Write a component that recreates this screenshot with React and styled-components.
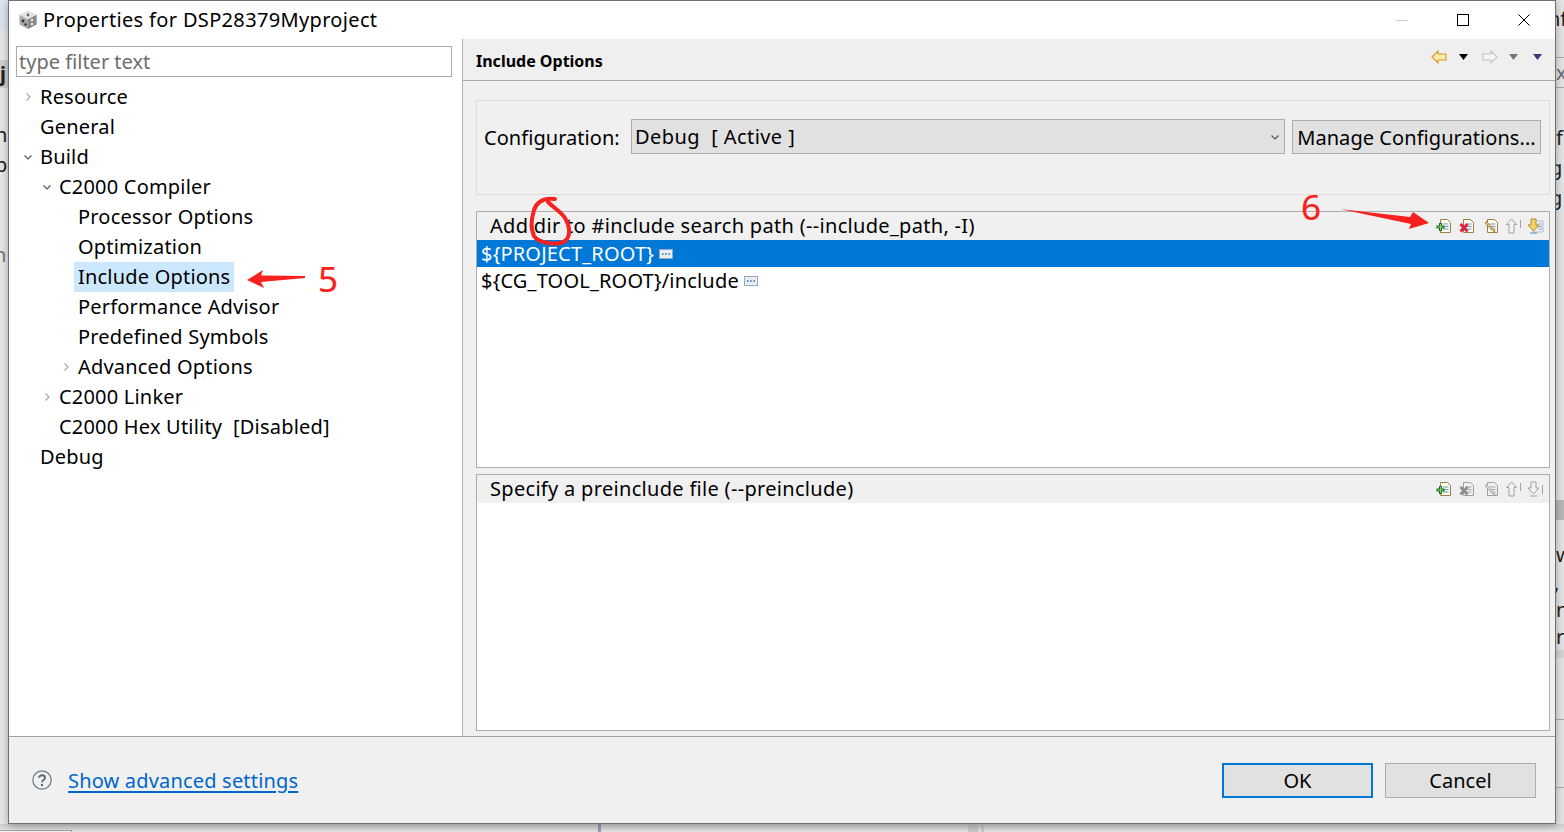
import styled, { createGlobalStyle } from "styled-components";

const Global = createGlobalStyle`
  html, body { margin: 0; padding: 0; height: 100%; background: #dcdcdc; overflow: hidden; }
  * { box-sizing: border-box; }
  #root { height: 832px; }
`;

const Page = styled.div`
  position: relative;
  width: 1564px;
  height: 832px;
  display: flex;
  font-family: "Noto Sans", "Open Sans", sans-serif;
  font-size: 20px;
  color: #000;
  overflow: hidden;
  background: #e4e4e4;
`;

const EdgeStrip = styled.div`
  width: ${({ $w }) => $w}px;
  height: 824px;
  flex: none;
  display: flex;
  flex-direction: column;
  overflow: hidden;
  background: ${({ $bg }) => $bg};
`;

const EdgeText = styled.div`
  height: ${({ $h }) => $h}px;
  line-height: ${({ $h }) => $h}px;
  flex: none;
  white-space: nowrap;
  font-weight: ${({ $bold }) => ($bold ? 700 : 400)};
  color: ${({ $c }) => $c || "#222"};
  background: ${({ $bg }) => $bg || "transparent"};
  border-top: ${({ $line }) => ($line ? "1px solid #aaa" : "none")};
  text-indent: ${({ $indent }) => $indent || 0}px;
  overflow: hidden;
`;

const Dialog = styled.div`
  width: 1548px;
  height: 824px;
  flex: none;
  display: flex;
  flex-direction: column;
  background: #f0f0f0;
  border: 1px solid #707070;
  box-shadow: 0 2px 8px rgba(0, 0, 0, 0.3);
  z-index: 1;
`;

const TitleBar = styled.div`
  height: 38px;
  flex: none;
  background: #fff;
  display: flex;
  align-items: center;
  padding-left: 9px;
`;

const TitleText = styled.span`
  margin-left: 5px;
  margin-bottom: 2px;
  letter-spacing: 0.34px;
`;

const WindowButtons = styled.div`
  margin-left: auto;
  margin-right: 1px;
  margin-bottom: 1px;
  display: flex;
  align-items: center;
`;

const WinBtn = styled.div`
  width: 61px;
  height: 37px;
  display: flex;
  align-items: center;
  justify-content: center;
`;

const Body = styled.div`
  flex: 1;
  min-height: 0;
  display: flex;
`;

const Sidebar = styled.div`
  width: 454px;
  flex: none;
  background: #fff;
  border-right: 1px solid #b4b4b4;
  padding: 7px 0 0 7px;
`;

const Filter = styled.div`
  width: 436px;
  height: 31px;
  border: 1px solid #ababab;
  line-height: 29px;
  padding-left: 2px;
  color: #6d6d6d;
  margin-bottom: 5px;
`;

const Row = styled.div`
  height: 30px;
  display: flex;
  align-items: center;
  padding-left: ${({ $level }) => 2 + $level * 19}px;
`;

const ChevronSlot = styled.div`
  width: 20px;
  margin-right: 2px;
  flex: none;
  display: flex;
  justify-content: center;
`;

const RowLabel = styled.span`
  padding: 0 4px;
  margin-left: -4px;
  height: 30px;
  line-height: 30px;
  white-space: pre;
  letter-spacing: 0.2px;
  background: ${({ $active }) => ($active ? "#cce8ff" : "transparent")};
`;

const Main = styled.div`
  flex: 1;
  min-width: 0;
  display: flex;
  flex-direction: column;
`;

const Header = styled.div`
  height: 42px;
  flex: none;
  background: #efefef;
  border-bottom: 1px solid #a8a8a8;
  display: flex;
  align-items: center;
  padding: 0 12px 0 13px;
`;

const HeaderTitle = styled.span`
  font-size: 16px;
  font-weight: 700;
  margin-top: 2px;
`;

const HeaderTools = styled.div`
  margin-left: auto;
  margin-bottom: 6px;
  display: flex;
  align-items: center;
`;

const HeaderSlot = styled.div`
  width: ${({ $w }) => $w}px;
  display: flex;
  align-items: center;
`;

const Content = styled.div`
  flex: 1;
  padding: 19px 5px 0 13px;
  display: flex;
  flex-direction: column;
`;

const ConfigBox = styled.div`
  height: 95px;
  flex: none;
  border: 1px solid #dcdcdc;
  display: flex;
  align-items: flex-start;
  padding: 19px 8px 0 7px;
  margin-bottom: 16px;
`;

const ConfigLabel = styled.span`
  width: 147px;
  flex: none;
  line-height: 36px;
  letter-spacing: 0.05px;
`;

const Combo = styled.div`
  flex: 1;
  height: 35px;
  margin: -1px 7px 0 0;
  background: #e1e1e1;
  border: 1px solid #adadad;
  display: flex;
  align-items: center;
  justify-content: space-between;
  padding: 0 4px 0 3px;
  white-space: pre;
  letter-spacing: 0.42px;
`;

const GrayButton = styled.div`
  height: ${({ $h }) => $h || 34}px;
  width: ${({ $w }) => $w}px;
  flex: none;
  background: #e1e1e1;
  border: ${({ $primary }) => ($primary ? "2px solid #0078d7" : "1px solid #adadad")};
  display: flex;
  align-items: center;
  justify-content: center;
  white-space: nowrap;
  letter-spacing: 0.06px;
`;

const Panel = styled.div`
  height: 257px;
  width: 1074px;
  flex: none;
  background: #fff;
  border: 1px solid #adadad;
  margin-bottom: ${({ $mb }) => $mb || 0}px;
`;

const PanelHead = styled.div`
  height: 28px;
  background: #f0f0f0;
  display: flex;
  align-items: center;
  padding: 0 3px 2px 13px;
  letter-spacing: 0.31px;
`;

const PanelTools = styled.div`
  margin-left: auto;
  margin-top: 1px;
  display: flex;
  align-items: center;
`;

const ToolSlot = styled.div`
  width: ${({ $w }) => $w}px;
  display: flex;
  justify-content: center;
`;

const ListRow = styled.div`
  height: 27px;
  display: flex;
  align-items: center;
  padding-left: 4px;
  gap: 5px;
  letter-spacing: 0.19px;
  background: ${({ $selected }) => ($selected ? "#0078d7" : "#fff")};
  color: ${({ $selected }) => ($selected ? "#fff" : "#000")};
`;

const Footer = styled.div`
  height: 87px;
  flex: none;
  border-top: 1px solid #a0a0a0;
  background: #f0f0f0;
  display: flex;
  align-items: center;
  padding: 0 19px 0 23px;
  gap: 12px;
`;

const HelpLink = styled.a`
  color: #0066cc;
  text-decoration: underline;
  text-underline-offset: 3px;
  letter-spacing: 0.18px;
  margin-left: 4px;
  margin-right: auto;
`;

const Annotations = styled.svg`
  position: absolute;
  left: 0;
  top: 0;
  z-index: 2;
  pointer-events: none;
`;

const RedNumber = styled.span`
  position: absolute;
  z-index: 2;
  left: ${({ $x }) => $x}px;
  top: ${({ $y }) => $y}px;
  color: #f8211f;
  font-size: 35px;
  line-height: 40px;
  font-weight: 400;
  -webkit-text-stroke: 0.2px #f8211f;
`;

const BottomBits = styled.div`
  position: absolute;
  left: 0;
  right: 0;
  top: 824px;
  height: 8px;
  background: linear-gradient(#cfcfcf, #e6e6e6);
  display: flex;
`;

const BottomCell = styled.div`
  width: ${({ $w }) => $w}px;
  flex: none;
  background: ${({ $bg }) => $bg || "transparent"};
`;

const BottomTab = styled.div`
  width: 72px;
  flex: none;
  margin-top: 6px;
  border-top: 1px solid #a8a8b0;
  border-right: 1px solid #a8a8b0;
  background: #f4f4f4;
`;

const Chevron = ({ open }) => (
  <svg width="10" height="10" viewBox="0 0 10 10">
    <path
      d={open ? "M1.5 3.5 L5 7 L8.5 3.5" : "M3.5 1.5 L7 5 L3.5 8.5"}
      fill="none"
      stroke={open ? "#555" : "#a8a8a8"}
      strokeWidth="1.2"
    />
  </svg>
);

const CubeIcon = () => (
  <svg width="20" height="20" viewBox="0 0 20 20">
    <path d="M10 1 L18.5 5 L18.5 14.5 L10 19 L1.5 14.5 L1.5 5 Z" fill="#a9a9a9" />
    <path d="M10 1 L18.5 5 L10 9.5 L1.5 5 Z" fill="#e4e4e4" />
    <path d="M10 9.5 L18.5 5 L18.5 14.5 L10 19 Z" fill="#8a8a8a" />
    <circle cx="10" cy="5" r="1.4" fill="#666" />
    <circle cx="5" cy="11" r="1.4" fill="#333" />
    <circle cx="7.5" cy="14.5" r="1.2" fill="#333" />
    <circle cx="14" cy="10" r="1.2" fill="#eee" />
    <circle cx="14" cy="14" r="1.2" fill="#eee" />
  </svg>
);

const Triangle = ({ c }) => (
  <svg width="9" height="6" viewBox="0 0 9 6">
    <path d="M0 0 H9 L4.5 6 Z" fill={c} />
  </svg>
);

const NavArrow = ({ dir, fill, stroke }) => (
  <svg width="16" height="14" viewBox="0 0 16 14">
    <path
      d={dir === "left" ? "M1 7 L7 1 V4 H15 V10 H7 V13 Z" : "M15 7 L9 1 V4 H1 V10 H9 V13 Z"}
      fill={fill}
      stroke={stroke}
      strokeWidth="1.1"
    />
  </svg>
);

// page with lines, shared by the list toolbar icons
const DocBase = ({ on }) => (
  <>
    <path d="M4.5 1.5 H11.5 L14.5 4.5 V14.5 H4.5 Z" fill={on ? "#fbfbf0" : "#f0f0f0"} stroke={on ? "#9b8042" : "#a0a0a0"} />
    <path d="M7 6 H12.5 M7 8.5 H12.5 M7 11 H12.5" stroke={on ? "#6f97c8" : "#a8a8a8"} />
  </>
);

const AddIcon = () => (
  <svg width="16" height="16" viewBox="0 0 16 16">
    <DocBase on />
    <path d="M4.5 5 V13 M0.5 9 H8.5" stroke="#1f6b2a" strokeWidth="3" />
    <path d="M4.5 6 V12 M1.5 9 H7.5" stroke="#8fdc5a" strokeWidth="1" />
  </svg>
);

const DeleteIcon = ({ on }) => (
  <svg width="16" height="16" viewBox="0 0 16 16">
    <DocBase on={on} />
    <path d="M1.5 6 L8.5 13.5 M8.5 6 L1.5 13.5" stroke={on ? "#d9263a" : "#909090"} strokeWidth="3" />
  </svg>
);

const EditIcon = ({ on }) => (
  <svg width="16" height="16" viewBox="0 0 16 16">
    <DocBase on={on} />
    <path d="M2 5 L9.5 12.5 L12 14 L11 11.5 L3.5 3.5 Z" fill={on ? "#e8c868" : "#d8d8d8"} stroke={on ? "#8a7440" : "#a0a0a0"} strokeWidth="0.8" />
  </svg>
);

const UpIcon = () => (
  <svg width="17" height="16" viewBox="0 0 17 16">
    <path d="M6.5 1 L11.5 6.5 H9 V15 H4 V6.5 H1.5 Z" fill="#f2f2f2" stroke="#a0a0a0" />
    <path d="M15.5 2 V10" stroke="#a0a0a0" />
  </svg>
);

const DownIcon = ({ on }) => (
  <svg width="17" height="16" viewBox="0 0 17 16">
    {on && <path d="M9 3 H16 V14 H6 V12" fill="#eef2f8" stroke="#b4bccb" />}
    {on && <path d="M11 6 H15 M11 8.5 H15 M11 11 H15" stroke="#8aa6cc" />}
    {!on && <path d="M15.5 4 V13" stroke="#a0a0a0" />}
    <path
      d="M4 1 H9 V7 H12 L6.5 13 L1 7 H4 Z"
      fill={on ? "#f6d36a" : "#f2f2f2"}
      stroke={on ? "#b08a30" : "#a0a0a0"}
    />
    <path d="M3 15 H10" stroke={on ? "#5a8ac0" : "#a0a0a0"} />
  </svg>
);

const VarIcon = () => (
  <svg width="14" height="10" viewBox="0 0 14 10">
    <rect x="0.5" y="0.5" width="13" height="9" fill="#e8eef6" stroke="#9aa8bc" />
    <path d="M3 5 H4.4 M6.2 5 H7.6 M9.4 5 H10.8" stroke="#2b5c96" strokeWidth="1.4" />
  </svg>
);

const HelpIcon = () => (
  <svg width="20" height="20" viewBox="0 0 20 20">
    <circle cx="10" cy="10" r="9.2" fill="none" stroke="#6b7a90" strokeWidth="1.2" />
    <path d="M7 7.8 C7 4.4 13 4.4 13 7.8 C13 10 10 9.8 10 12.2" fill="none" stroke="#5a6472" strokeWidth="1.8" />
    <circle cx="10" cy="15" r="1.2" fill="#5a6472" />
  </svg>
);

const tree = [
  { label: "Resource", level: 0, arrow: "closed" },
  { label: "General", level: 0 },
  { label: "Build", level: 0, arrow: "open" },
  { label: "C2000 Compiler", level: 1, arrow: "open" },
  { label: "Processor Options", level: 2 },
  { label: "Optimization", level: 2 },
  { label: "Include Options", level: 2, active: true },
  { label: "Performance Advisor", level: 2 },
  { label: "Predefined Symbols", level: 2 },
  { label: "Advanced Options", level: 2, arrow: "closed" },
  { label: "C2000 Linker", level: 1, arrow: "closed" },
  { label: "C2000 Hex Utility  [Disabled]", level: 1 },
  { label: "Debug", level: 0 },
];

const Toolbar = ({ on }) => (
  <PanelTools>
    <ToolSlot $w={22}><AddIcon /></ToolSlot>
    <ToolSlot $w={24}><DeleteIcon on={on} /></ToolSlot>
    <ToolSlot $w={24}><EditIcon on={on} /></ToolSlot>
    <ToolSlot $w={21}><UpIcon /></ToolSlot>
    <ToolSlot $w={22}><DownIcon on={on} /></ToolSlot>
  </PanelTools>
);

export default function App() {
  return (
    <Page>
      <Global />
      <EdgeStrip $w={8} $bg="#e6e6e6">
        <EdgeText $h={30} $bg="#dde3ee" />
        <EdgeText $h={30} />
        <EdgeText $h={28} $bold $bg="#cfcfcf">j</EdgeText>
        <EdgeText $h={32} />
        <EdgeText $h={30} $indent={-5}>n</EdgeText>
        <EdgeText $h={30} $indent={-5}>p</EdgeText>
        <EdgeText $h={60} />
        <EdgeText $h={30} $c="#777" $indent={-6}>n</EdgeText>
      </EdgeStrip>
      <Dialog>
        <TitleBar>
          <CubeIcon />
          <TitleText>Properties for DSP28379Myproject</TitleText>
          <WindowButtons>
            <WinBtn>
              <svg width="12" height="12" viewBox="0 0 12 12"><path d="M0 6.5 H12" stroke="#ccc" /></svg>
            </WinBtn>
            <WinBtn>
              <svg width="12" height="12" viewBox="0 0 12 12"><rect x="0.5" y="0.5" width="11" height="11" fill="none" stroke="#000" /></svg>
            </WinBtn>
            <WinBtn>
              <svg width="12" height="12" viewBox="0 0 12 12"><path d="M0.5 0.5 L11.5 11.5 M11.5 0.5 L0.5 11.5" stroke="#000" /></svg>
            </WinBtn>
          </WindowButtons>
        </TitleBar>
        <Body>
          <Sidebar>
            <Filter>type filter text</Filter>
            {tree.map((item) => (
              <Row key={item.label} $level={item.level}>
                <ChevronSlot>
                  {item.arrow && <Chevron open={item.arrow === "open"} />}
                </ChevronSlot>
                <RowLabel $active={item.active}>{item.label}</RowLabel>
              </Row>
            ))}
          </Sidebar>
          <Main>
            <Header>
              <HeaderTitle>Include Options</HeaderTitle>
              <HeaderTools>
                <HeaderSlot $w={28}><NavArrow dir="left" fill="#fde9a8" stroke="#d49a2a" /></HeaderSlot>
                <HeaderSlot $w={23}><Triangle c="#000" /></HeaderSlot>
                <HeaderSlot $w={27}><NavArrow dir="right" fill="#f5f5f5" stroke="#c4c4c4" /></HeaderSlot>
                <HeaderSlot $w={24}><Triangle c="#777" /></HeaderSlot>
                <HeaderSlot $w={10}><Triangle c="#4a2f7a" /></HeaderSlot>
              </HeaderTools>
            </Header>
            <Content>
              <ConfigBox>
                <ConfigLabel>Configuration:</ConfigLabel>
                <Combo>
                  <span>Debug  [ Active ]</span>
                  <Chevron open />
                </Combo>
                <GrayButton $w={249}>Manage Configurations...</GrayButton>
              </ConfigBox>
              <Panel $mb={6}>
                <PanelHead>
                  Add dir to #include search path (--include_path, -I)
                  <Toolbar on />
                </PanelHead>
                <ListRow $selected>${"{PROJECT_ROOT}"}<VarIcon /></ListRow>
                <ListRow>${"{CG_TOOL_ROOT}/include"}<VarIcon /></ListRow>
              </Panel>
              <Panel>
                <PanelHead>
                  Specify a preinclude file (--preinclude)
                  <Toolbar />
                </PanelHead>
              </Panel>
            </Content>
          </Main>
        </Body>
        <Footer>
          <HelpIcon />
          <HelpLink href="#">Show advanced settings</HelpLink>
          <GrayButton $w={151} $h={35} $primary>OK</GrayButton>
          <GrayButton $w={151} $h={35}>Cancel</GrayButton>
        </Footer>
      </Dialog>
      <EdgeStrip $w={8} $bg="#e4e4e4">
        <EdgeText $h={38} $indent={-8}>nf</EdgeText>
        <EdgeText $h={19} />
        <EdgeText $h={30} $line $c="#667">x</EdgeText>
        <EdgeText $h={36} $line />
        <EdgeText $h={30}>fi</EdgeText>
        <EdgeText $h={30} $indent={-6}>g</EdgeText>
        <EdgeText $h={30} $indent={-6}>g</EdgeText>
        <EdgeText $h={287} />
        <EdgeText $h={20} $bg="#b8b8b8" />
        <EdgeText $h={20} />
        <EdgeText $h={30}>w</EdgeText>
        <EdgeText $h={26} $indent={-2}>,</EdgeText>
        <EdgeText $h={28}>n</EdgeText>
        <EdgeText $h={26}>r</EdgeText>
        <EdgeText $h={8} $bg="#d4d4d4" />
        <EdgeText $h={61} />
        <EdgeText $h={68} $line />
        <EdgeText $h={30} $line />
      </EdgeStrip>
      <BottomBits>
        <BottomTab />
        <BottomCell $w={526} />
        <BottomCell $w={3} $bg="#9c9ca4" />
        <BottomCell $w={367} />
        <BottomCell $w={10} $bg="#c8c8c8" />
        <BottomCell $w={3} />
        <BottomCell $w={3} $bg="#c8c8c8" />
      </BottomBits>
      <Annotations width="1564" height="832" viewBox="0 0 1564 832">
        <path d="M247 280 L263 270 L261 275.5 L305 276 L305 278 L261 282 L264 288 Z" fill="#f8211f" />
        <path d="M1340 209 L1410 217 L1413 212 L1429 223 L1409 229 L1411 224 Z" fill="#f8211f" />
        <path
          d="M555 199 C545 198 537 201 534 210 C531 220 531 230 534 236 C538 243 558 246 565 241 C571 236 570 226 565 218 C561 212 554 208 548 202"
          fill="none"
          stroke="#f8211f"
          strokeWidth="4"
          strokeLinecap="round"
        />
      </Annotations>
      <RedNumber $x={318} $y={259}>5</RedNumber>
      <RedNumber $x={1301} $y={187}>6</RedNumber>
    </Page>
  );
}
